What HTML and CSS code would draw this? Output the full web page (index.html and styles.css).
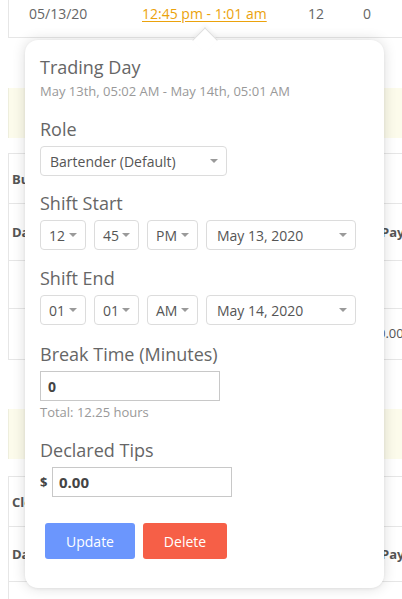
FILE: index.html
```html
<!DOCTYPE html>
<html>
<head>
<meta charset="utf-8">
<link rel="stylesheet" href="styles.css">
</head>
<body>
<div class="page">
  <div class="top-row">
    <span>05/13/20</span>
    <a class="shift-link" href="#">12:45 pm - 1:01 am</a>
    <span>12</span>
    <span>0</span>
  </div>
  <div class="spacer-a"></div>
  <div class="note"></div>
  <div class="table t1">
    <div class="trow r-a"><span class="bold">Business</span></div>
    <div class="trow r-b"><span class="bold">Date</span><span class="bold right">Pay</span></div>
    <div class="trow r-c"></div>
    <div class="trow r-d"><span></span><span class="right">0.00</span></div>
  </div>
  <div class="note note2"></div>
  <div class="table t2">
    <div class="trow r-a"><span class="bold">Clock</span></div>
    <div class="trow r-b2"><span class="bold">Date</span><span class="bold right">Pay</span></div>
    <div class="trow r-c"></div>
  </div>

  <div class="popup">
    <div class="arrow"></div>
    <div class="title">Trading Day</div>
    <div class="sub">May 13th, 05:02 AM - May 14th, 05:01 AM</div>

    <div class="field f-role">
      <div class="label">Role</div>
      <div class="select w-role"><span>Bartender (Default)</span><i class="caret"></i></div>
    </div>

    <div class="field f-start">
      <div class="label">Shift Start</div>
      <div class="selects">
        <div class="select w-num"><span>12</span><i class="caret"></i></div>
        <div class="select w-num"><span>45</span><i class="caret"></i></div>
        <div class="select w-ampm"><span>PM</span><i class="caret"></i></div>
        <div class="select w-date"><span>May 13, 2020</span><i class="caret"></i></div>
      </div>
    </div>

    <div class="field f-end">
      <div class="label">Shift End</div>
      <div class="selects">
        <div class="select w-num"><span>01</span><i class="caret"></i></div>
        <div class="select w-num"><span>01</span><i class="caret"></i></div>
        <div class="select w-ampm"><span>AM</span><i class="caret"></i></div>
        <div class="select w-date"><span>May 14, 2020</span><i class="caret"></i></div>
      </div>
    </div>

    <div class="field f-break">
      <div class="label">Break Time (Minutes)</div>
      <div class="input w-break">0</div>
      <div class="total">Total: 12.25 hours</div>
    </div>

    <div class="field f-tips">
      <div class="label">Declared Tips</div>
      <div class="tips-row">
        <span class="dollar">$</span>
        <div class="input w-tips">0.00</div>
      </div>
    </div>

    <div class="buttons">
      <button class="btn btn-update">Update</button>
      <button class="btn btn-delete">Delete</button>
    </div>
  </div>
</div>
</body>
</html>
```
FILE: styles.css
```css
* { box-sizing: border-box; }
html, body {
  margin: 0;
  padding: 0;
  background: #fff;
  overflow: hidden;
}
body {
  font-family: "Open Sans", "Liberation Sans", sans-serif;
  color: #555;
  width: 402px;
  height: 599px;
}
.page {
  position: relative;
  width: 402px;
  height: 599px;
  padding-left: 8px;
  overflow: hidden;
}
.top-row {
  height: 38px;
  border-left: 1px solid #e6e6e6;
  border-bottom: 1px solid #e6e6e6;
  display: grid;
  grid-template-columns: 113px 166px 55px 1fr;
  padding: 4px 0 0 20px;
  font-size: 14px;
  line-height: 20px;
  color: #666;
  width: 420px;
}
.shift-link {
  color: #eba20c;
  text-decoration: underline;
  text-underline-offset: 2px;
}
.spacer-a { height: 50px; }
.note {
  height: 50px;
  background: #fcfbeb;
  width: 420px;
  border-left: 1px solid #eeeedd;
}
.table {
  width: 420px;
  margin-top: 15px;
  border-left: 1px solid #e6e6e6;
  border-top: 1px solid #e6e6e6;
}
.trow {
  border-bottom: 1px solid #e6e6e6;
  display: grid;
  grid-template-columns: 369px 1fr;
  align-items: center;
  padding-left: 3px;
  font-size: 13px;
  color: #555;
}
.bold { font-weight: 700; }
.r-a { height: 50px; }
.r-b { height: 57px; }
.r-b2 { height: 55px; }
.r-c { height: 48px; }
.r-d { height: 51px; padding-bottom: 2px; grid-template-columns: 366px 1fr; }
.note2 { margin-top: 49px; }
.t2 { margin-top: 17px; }

/* popup */
.popup {
  position: absolute;
  left: 25px;
  top: 40px;
  width: 359px;
  height: 548px;
  background: #fff;
  border-radius: 13px;
  box-shadow: 0 0 14px rgba(0, 0, 0, 0.14), 0 1px 3px rgba(0, 0, 0, 0.06);
  padding: 15px 15px 0 15px;
  color: #666;
}
.arrow {
  position: absolute;
  left: 171px;
  top: -9px;
  width: 18px;
  height: 18px;
  background: #fff;
  transform: rotate(45deg);
  border-left: 1px solid #dedede;
  border-top: 1px solid #dedede;
  box-shadow: -2px -2px 4px rgba(0, 0, 0, 0.04);
}
.title, .label {
  font-size: 18px;
  line-height: 24px;
  color: #666;
}
.title { position: relative; }
.sub {
  margin-top: 4px;
  font-size: 13px;
  line-height: 17px;
  color: #999;
}
.label { margin-bottom: 5px; }
.f-role { margin-top: 17px; }
.f-start { margin-top: 15px; }
.f-end { margin-top: 16px; }
.f-break { margin-top: 17px; }
.f-tips { margin-top: 17px; }

.selects {
  display: flex;
  gap: 8px;
}
.select {
  height: 30px;
  border: 1px solid #dcdcdc;
  border-radius: 4px;
  background: #fff;
  display: flex;
  align-items: center;
  justify-content: space-between;
  padding: 0 8px 0 8px;
  font-size: 14px;
  color: #555;
}
.caret {
  width: 0;
  height: 0;
  border-left: 4px solid transparent;
  border-right: 4px solid transparent;
  border-top: 4px solid #9a9a9a;
}
.w-role { width: 187px; padding-left: 9px; }
.w-num { width: 46px; }
.w-num:nth-child(2) { width: 45px; }
.w-ampm { width: 51px; }
.w-date { width: 150px; padding-left: 10px; padding-right: 8px; }

.input {
  height: 30px;
  border: 1px solid #c8c8c8;
  font-size: 14px;
  font-weight: 700;
  color: #444;
  display: flex;
  align-items: center;
  padding-left: 7px;
}
.w-break { width: 180px; }
.total {
  margin-top: 3px;
  font-size: 13px;
  line-height: 17px;
  color: #999;
}
.tips-row {
  display: flex;
  align-items: center;
  gap: 5px;
}
.dollar {
  font-size: 13px;
  font-weight: 700;
  color: #444;
  width: 7px;
}
.w-tips { width: 180px; font-size: 15px; padding-left: 6px; }

.buttons {
  margin-top: 26px;
  padding-left: 5px;
  display: flex;
  gap: 8px;
}
.btn {
  height: 36px;
  border: none;
  border-radius: 3px;
  color: #fff;
  font-family: "Open Sans", "Liberation Sans", sans-serif;
  font-size: 14px;
  padding: 0;
}
.btn-update { width: 90px; background: #6b96fd; }
.btn-delete { width: 84px; background: #f65f47; }
```
